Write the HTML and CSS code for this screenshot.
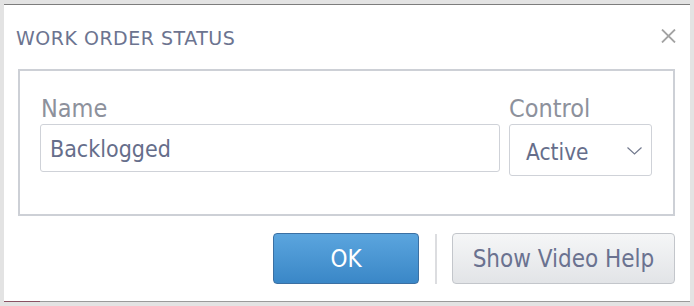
FILE: index.html
```html
<!DOCTYPE html>
<html lang="en">
<head>
    <meta charset="UTF-8">
    <meta name="viewport" content="width=device-width, initial-scale=1.0">
    <title>Work Order Status</title>
    <link rel="stylesheet" href="styles.css">
</head>
<body>
    <div class="dialog">
        <div class="dialog-header">
            <h1 class="dialog-title">WORK ORDER STATUS</h1>
            <button class="close-btn" aria-label="Close">
                <svg width="15" height="14" viewBox="0 0 15 14">
                    <path d="M1 0.5 L14 13.5 M14 0.5 L1 13.5" stroke="#a3a3a3" stroke-width="1.8" fill="none"/>
                </svg>
            </button>
        </div>
        <div class="field-box">
            <div class="field name-field">
                <label class="field-label" for="name">Name</label>
                <input class="text-input" type="text" id="name" value="Backlogged">
            </div>
            <div class="field control-field">
                <label class="field-label">Control</label>
                <div class="select">
                    <span>Active</span>
                    <svg width="15" height="8" viewBox="0 0 15 8">
                        <path d="M0.5 0.5 L7.5 7 L14.5 0.5" stroke="#737a8e" stroke-width="1.2" fill="none"/>
                    </svg>
                </div>
            </div>
        </div>
        <div class="dialog-footer">
            <button class="btn btn-ok">OK</button>
            <span class="divider"></span>
            <button class="btn btn-help">Show Video Help</button>
        </div>
    </div>
</body>
</html>
```

FILE: styles.css
```css
body {
    margin: 0;
    background-color: #e3e3e3;
    font-family: "DejaVu Sans Condensed", "DejaVu Sans", sans-serif;
    font-stretch: condensed;
}
.dialog {
    position: relative;
    width: 686px;
    height: 296px;
    margin: 4px 0 0 4px;
    background-color: #fff;
    border-top: 1px solid #7d7d7d;
    border-bottom: 1px solid #9a9a9a;
}
.dialog::after {
    content: "";
    position: absolute;
    left: 0;
    bottom: -1px;
    width: 36px;
    height: 1px;
    background-color: #8a5263;
}
.dialog-header {
    display: flex;
    justify-content: space-between;
    align-items: flex-start;
    padding: 22px 14px 0 12px;
}
.dialog-title {
    margin: 0;
    font-family: "DejaVu Sans", sans-serif;
    font-stretch: normal;
    font-size: 19px;
    line-height: 22px;
    font-weight: normal;
    letter-spacing: 0.5px;
    color: #6c7490;
}
.close-btn {
    border: none;
    background: none;
    padding: 0;
    margin-top: 2px;
    width: 15px;
    height: 14px;
    display: flex;
}
.field-box {
    display: flex;
    gap: 9px;
    margin: 20px 15px 0 14px;
    padding: 24px 21px 38px 20px;
    border: 2px solid #cdd0d6;
}
.field {
    display: flex;
    flex-direction: column;
}
.name-field {
    flex: 1;
}
.field-label {
    font-size: 25px;
    line-height: 28px;
    color: #8d919c;
    margin-bottom: 1px;
    padding-left: 1px;
}
.control-field .field-label {
    padding-left: 0;
}
.text-input {
    box-sizing: border-box;
    height: 48px;
    width: 100%;
    margin: 0;
    padding: 2px 9px 0;
    border: 1px solid #cfd2d8;
    border-radius: 3px;
    font-family: inherit;
    font-stretch: condensed;
    font-size: 23px;
    color: #666e8b;
    outline: none;
}
.select {
    box-sizing: border-box;
    width: 143px;
    height: 52px;
    display: flex;
    align-items: center;
    justify-content: space-between;
    padding: 4px 9px 0 16px;
    border: 1px solid #cfd2d8;
    border-radius: 3px;
    font-size: 22.5px;
    color: #666e8b;
}
.select svg {
    margin-top: -3px;
}
.dialog-footer {
    display: flex;
    justify-content: flex-end;
    align-items: center;
    padding: 17px 15px 0 0;
}
.btn {
    box-sizing: border-box;
    height: 51px;
    margin: 0;
    border-radius: 4px;
    font-family: inherit;
    font-stretch: condensed;
    font-size: 24px;
    cursor: pointer;
}
.btn-ok {
    width: 146px;
    color: #fff;
    border: 1px solid #3b70a3;
    background: linear-gradient(#5ba5de, #3a87c7);
}
.divider {
    width: 2px;
    height: 50px;
    margin: 0 15px 0 16px;
    background-color: #dcdde0;
}
.btn-help {
    width: 223px;
    color: #6a7290;
    border: 1px solid #c3c6cb;
    background: linear-gradient(#f5f6f7, #e2e4e7);
}
```
